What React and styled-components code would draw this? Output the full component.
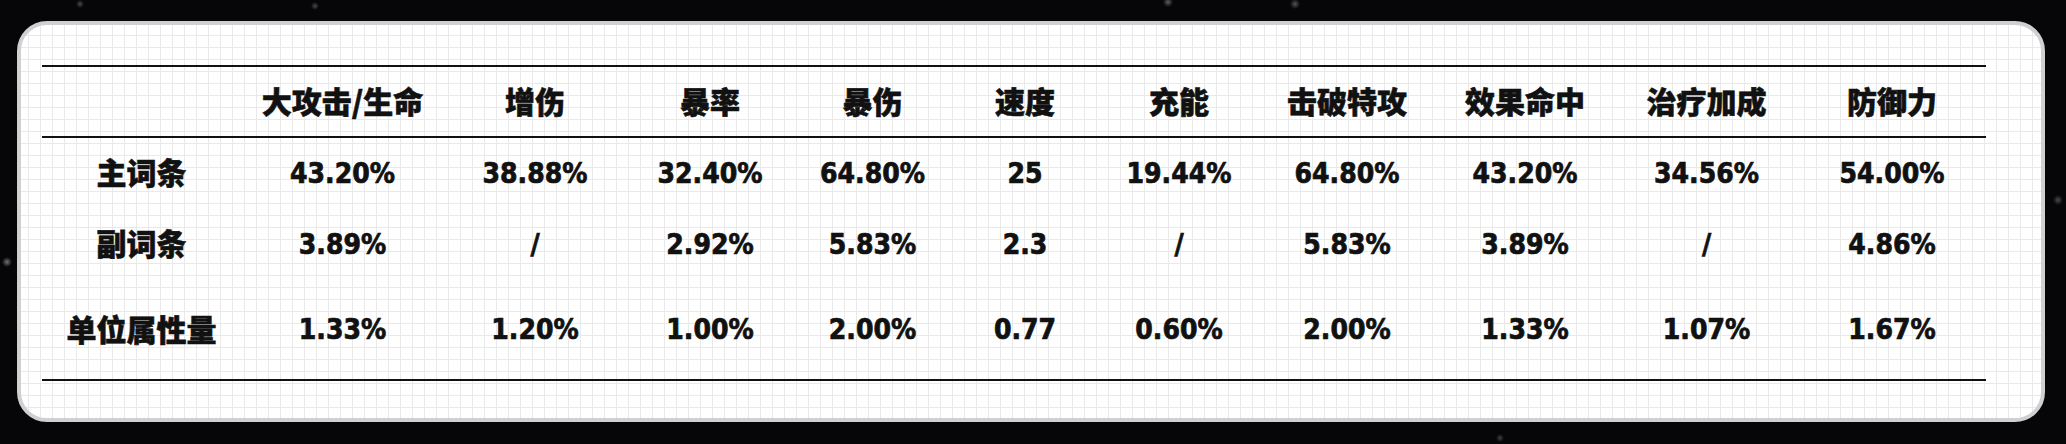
import React from "react";
import styled, { createGlobalStyle } from "styled-components";

const GlobalStyle = createGlobalStyle`
    * { box-sizing: border-box; }
    html, body {
        margin: 0;
        padding: 0;
    }
    body {
        width: 2066px;
        height: 444px;
        overflow: hidden;
        background-color: #060608;
        background-image:
            radial-gradient(circle at 7px 262px, rgba(200,200,210,0.55) 0, rgba(200,200,210,0) 5px),
            radial-gradient(circle at 80px 4px, rgba(200,200,210,0.35) 0, rgba(200,200,210,0) 4px),
            radial-gradient(circle at 315px 6px, rgba(200,200,210,0.35) 0, rgba(200,200,210,0) 4px),
            radial-gradient(circle at 1168px 2px, rgba(200,200,210,0.45) 0, rgba(200,200,210,0) 5px),
            radial-gradient(circle at 1295px 4px, rgba(200,200,210,0.4) 0, rgba(200,200,210,0) 5px),
            radial-gradient(circle at 2058px 200px, rgba(200,200,210,0.35) 0, rgba(200,200,210,0) 5px),
            radial-gradient(circle at 1500px 438px, rgba(200,200,210,0.3) 0, rgba(200,200,210,0) 4px);
        font-family: "DejaVu Sans Condensed", "DejaVu Sans", "Noto Sans CJK SC", sans-serif;
        color: #111;
    }
`;

const columns = [199, 203, 182, 168, 157, 148, 160, 176, 180, 183, 188];

const headers = ["", "大攻击/生命", "增伤", "暴率", "暴伤", "速度", "充能", "击破特攻", "效果命中", "治疗加成", "防御力"];

const rows = [
    { label: "主词条", values: ["43.20%", "38.88%", "32.40%", "64.80%", "25", "19.44%", "64.80%", "43.20%", "34.56%", "54.00%"] },
    { label: "副词条", values: ["3.89%", "/", "2.92%", "5.83%", "2.3", "/", "5.83%", "3.89%", "/", "4.86%"] },
    { label: "单位属性量", values: ["1.33%", "1.20%", "1.00%", "2.00%", "0.77", "0.60%", "2.00%", "1.33%", "1.07%", "1.67%"] },
];

const Card = styled.div`
    width: 2028px;
    height: 401px;
    margin: 21px 0 0 17px;
    padding: 40px 55px 0 21px;
    border: 4px solid #d0d0d2;
    border-radius: 30px;
    background-color: #ffffff;
    background-image:
        linear-gradient(#e9e9e9 1px, transparent 1px),
        linear-gradient(90deg, #e9e9e9 1px, transparent 1px);
    background-size: 12px 12px;
    background-position: 7px 10px;
`;

const Table = styled.div`
    display: grid;
    grid-template-columns: ${(p) => p.$cols.map((c) => `${c}px`).join(" ")};
    grid-template-rows: 71px 70px 72px 99px;
    border-top: 2px solid #111;
    border-bottom: 2px solid #111;
`;

const HeadCell = styled.div`
    display: flex;
    align-items: center;
    justify-content: center;
    padding-bottom: 4px;
    border-bottom: 2px solid #111;
    font-family: "Noto Sans CJK SC", sans-serif;
    font-size: 30px;
    font-weight: 900;
    -webkit-text-stroke: 0.6px #111;
    white-space: nowrap;
`;

const LabelCell = styled.div`
    display: flex;
    align-items: center;
    justify-content: center;
    padding-bottom: 4px;
    font-family: "Noto Sans CJK SC", sans-serif;
    font-size: 30px;
    font-weight: 900;
    -webkit-text-stroke: 0.6px #111;
    white-space: nowrap;
`;

const ValueCell = styled.div`
    display: flex;
    align-items: center;
    justify-content: center;
    font-family: "DejaVu Sans Condensed", "DejaVu Sans", sans-serif;
    font-size: 28px;
    font-weight: 700;
    -webkit-text-stroke: 0.7px #111;
    white-space: nowrap;
`;

export default function App() {
    return (
        <>
            <GlobalStyle />
            <Card>
                <Table $cols={columns}>
                    {headers.map((h, i) => (
                        <HeadCell key={`h${i}`}>{h}</HeadCell>
                    ))}
                    {rows.map((r) => (
                        <React.Fragment key={r.label}>
                            <LabelCell>{r.label}</LabelCell>
                            {r.values.map((v, j) => (
                                <ValueCell key={j}>{v}</ValueCell>
                            ))}
                        </React.Fragment>
                    ))}
                </Table>
            </Card>
        </>
    );
}
